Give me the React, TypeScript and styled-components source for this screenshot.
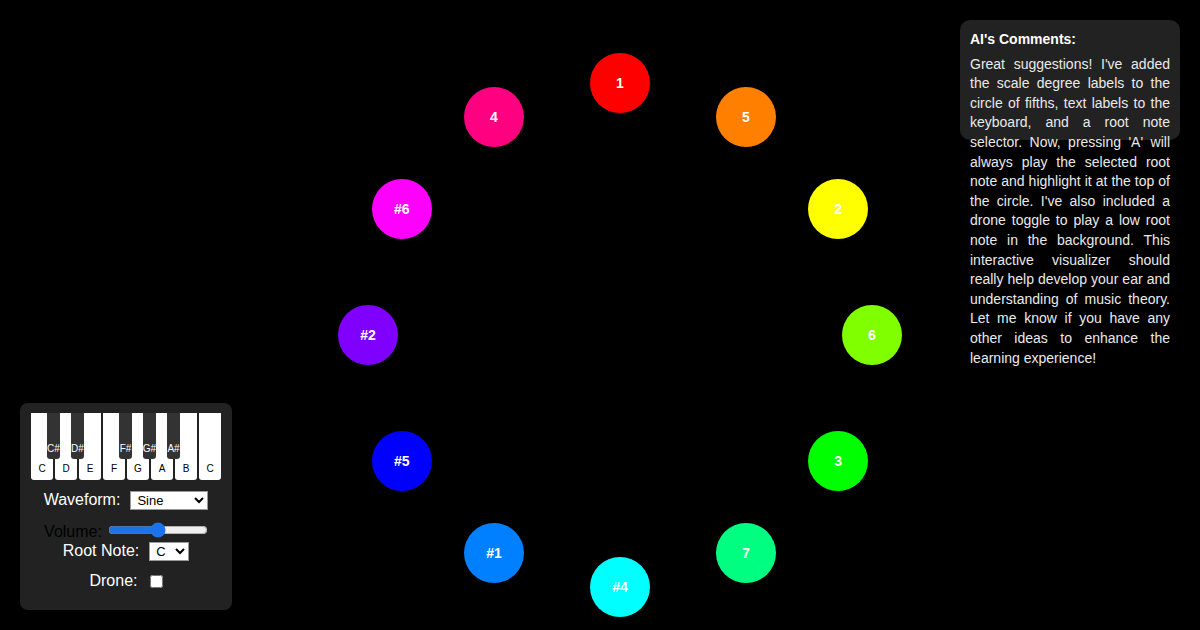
import styled, { createGlobalStyle } from "styled-components";

const GlobalStyle = createGlobalStyle`
  html, body {
    margin: 0;
    padding: 0;
    background: #000;
    font-family: "Liberation Sans", Arial, sans-serif;
  }
`;

const Page = styled.div`
  display: flex;
  width: 1200px;
  height: 630px;
  padding: 20px;
  box-sizing: border-box;
  overflow: hidden;
`;

const ControlPanel = styled.div`
  align-self: flex-end;
  width: 212px;
  box-sizing: border-box;
  padding: 10px 10px 19px;
  background: #222;
  border-radius: 8px;
`;

const Piano = styled.div`
  position: relative;
  display: flex;
  gap: 2px;
  padding-left: 1px;
  height: 67px;
`;

const WhiteKey = styled.div`
  width: 22px;
  height: 67px;
  background: #fff;
  border-radius: 0 0 3px 3px;
  display: flex;
  align-items: flex-end;
  justify-content: center;
  padding-bottom: 6px;
  box-sizing: border-box;
  font-size: 10px;
  color: #000;
`;

const BlackKey = styled.div`
  position: absolute;
  top: 0;
  width: 13px;
  height: 46px;
  background: #333;
  border-radius: 0 0 3px 3px;
  display: flex;
  align-items: flex-end;
  justify-content: center;
  padding-bottom: 5px;
  box-sizing: border-box;
  font-size: 10px;
  color: #fff;
  white-space: nowrap;
`;

const Row = styled.div<{ $top: number }>`
  display: flex;
  align-items: center;
  justify-content: center;
  height: 20px;
  margin-top: ${(p) => p.$top}px;
`;

const Label = styled.label<{ $dark?: boolean }>`
  font-size: 16px;
  color: ${(p) => (p.$dark ? "#000" : "#fff")};
  margin-right: 10px;
  transform: translateY(${(p) => (p.$dark ? 2 : 0)}px);
`;

const Select = styled.select<{ $w: number }>`
  width: ${(p) => p.$w}px;
  height: 19px;
  font-family: "Liberation Sans", Arial, sans-serif;
  font-size: 13px;
  background: #fff;
  color: #000;
  border: 1px solid #999;
  border-radius: 0;
  padding: 0 2px;
`;

const Slider = styled.input`
  width: 100px;
  margin: 0 0 0 -4px;
  accent-color: #1a73e8;
`;

const Checkbox = styled.input`
  margin: 0 0 0 2px;
  width: 13px;
  height: 13px;
`;

const Circle = styled.div`
  position: relative;
  flex: none;
  width: 564px;
  height: 564px;
  margin-left: 106px;
  margin-top: 33px;
`;

const Note = styled.div<{ $color: string }>`
  position: absolute;
  width: 60px;
  height: 60px;
  border-radius: 50%;
  background: ${(p) => p.$color};
  display: flex;
  align-items: center;
  justify-content: center;
  color: #fff;
  font-weight: bold;
  font-size: 14px;
`;

const Comments = styled.div`
  align-self: flex-start;
  flex: none;
  width: 220px;
  height: 120px;
  margin-left: 58px;
  box-sizing: border-box;
  padding: 10px;
  background: #222;
  border-radius: 10px;
  color: #fff;
  font-size: 14px;
  line-height: 19.6px;
`;

const CommentsTitle = styled.div`
  font-weight: bold;
  margin-bottom: 5px;
`;

const CommentsBody = styled.div`
  text-align: justify;
  color: #eaeaea;
`;

const whites = ["C", "D", "E", "F", "G", "A", "B", "C"];
const blacks = [
  { name: "C#", at: 0 },
  { name: "D#", at: 1 },
  { name: "F#", at: 3 },
  { name: "G#", at: 4 },
  { name: "A#", at: 5 },
];

const degrees = ["1", "5", "2", "6", "3", "7", "#4", "#1", "#5", "#2", "#6", "4"];

export default function App() {
  return (
    <>
      <GlobalStyle />
      <Page>
        <ControlPanel>
          <Piano>
            {whites.map((n, i) => (
              <WhiteKey key={i}>{n}</WhiteKey>
            ))}
            {blacks.map((b) => (
              <BlackKey key={b.name} style={{ left: b.at * 24 + 17 }}>
                {b.name}
              </BlackKey>
            ))}
          </Piano>
          <Row $top={10}>
            <Label>Waveform:</Label>
            <Select $w={78} defaultValue="sine">
              <option value="sine">Sine</option>
              <option value="square">Square</option>
              <option value="sawtooth">Sawtooth</option>
              <option value="triangle">Triangle</option>
            </Select>
          </Row>
          <Row $top={10}>
            <Label $dark>Volume:</Label>
            <Slider type="range" min={0} max={1} step={0.01} defaultValue={0.5} />
          </Row>
          <Row $top={1}>
            <Label>Root Note:</Label>
            <Select $w={40} defaultValue="C">
              {["C", "C#", "D", "D#", "E", "F", "F#", "G", "G#", "A", "A#", "B"].map((n) => (
                <option key={n} value={n}>
                  {n}
                </option>
              ))}
            </Select>
          </Row>
          <Row $top={10}>
            <Label>Drone:</Label>
            <Checkbox type="checkbox" />
          </Row>
        </ControlPanel>

        <Circle>
          {degrees.map((d, i) => {
            const a = (i * Math.PI) / 6;
            const x = 282 + 252 * Math.sin(a) - 30;
            const y = 282 - 252 * Math.cos(a) - 30;
            return (
              <Note key={d} $color={`hsl(${i * 30}, 100%, 50%)`} style={{ left: x, top: y }}>
                {d}
              </Note>
            );
          })}
        </Circle>

        <Comments>
          <CommentsTitle>AI's Comments:</CommentsTitle>
          <CommentsBody>
            Great suggestions! I've added the scale degree labels to the circle of fifths, text
            labels to the keyboard, and a root note selector. Now, pressing 'A' will always play the
            selected root note and highlight it at the top of the circle. I've also included a drone
            toggle to play a low root note in the background. This interactive visualizer should
            really help develop your ear and understanding of music theory. Let me know if you have
            any other ideas to enhance the learning experience!
          </CommentsBody>
        </Comments>
      </Page>
    </>
  );
}
